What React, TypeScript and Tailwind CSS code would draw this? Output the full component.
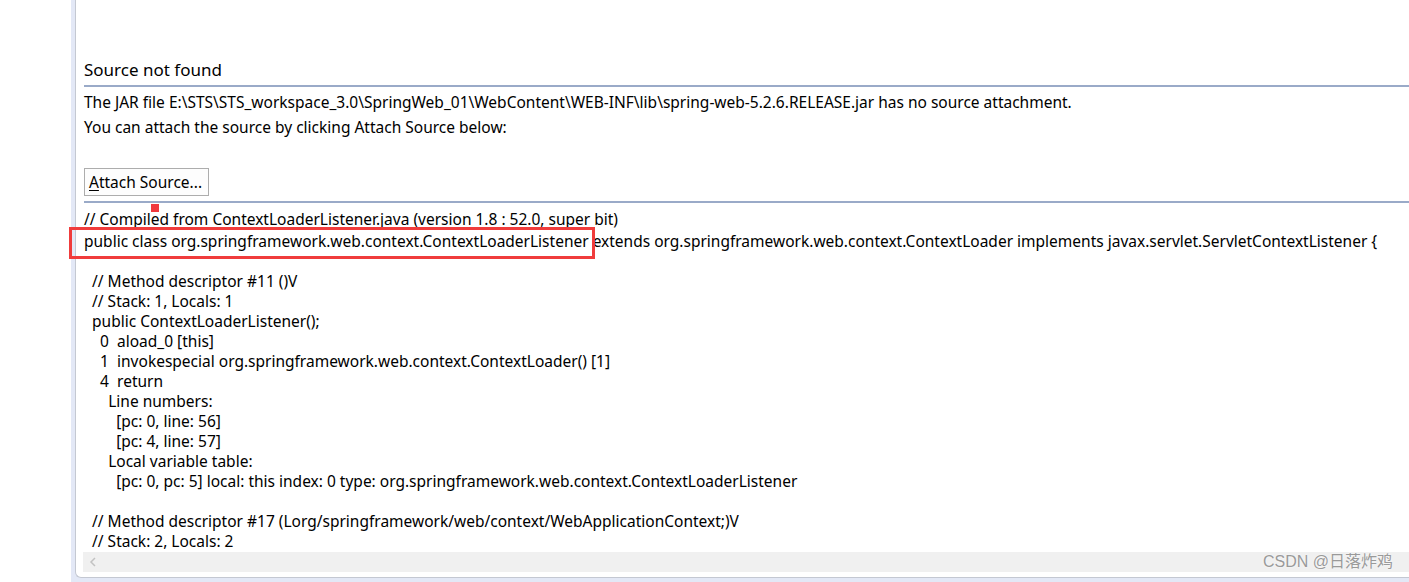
import React from 'react'

const CODE = [
  '  // Method descriptor #11 ()V',
  '  // Stack: 1, Locals: 1',
  '  public ContextLoaderListener();',
  '    0  aload_0 [this]',
  '    1  invokespecial org.springframework.web.context.ContextLoader() [1]',
  '    4  return',
  '      Line numbers:',
  '        [pc: 0, line: 56]',
  '        [pc: 4, line: 57]',
  '      Local variable table:',
  '        [pc: 0, pc: 5] local: this index: 0 type: org.springframework.web.context.ContextLoaderListener',
  '',
  '  // Method descriptor #17 (Lorg/springframework/web/context/WebApplicationContext;)V',
  '  // Stack: 2, Locals: 2',
]

export default function App() {
  return (
    <div
      className="flex h-[582px] w-[1409px] overflow-hidden bg-white text-black"
      style={{ fontFamily: '"Noto Sans", "Open Sans", sans-serif' }}
    >
      {/* left gutter */}
      <div className="w-[71px] shrink-0 bg-white" />
      <div className="w-[4px] shrink-0 bg-[#e3e8f6]" />

      <div className="flex min-w-0 flex-1 flex-col bg-[#e3e8f6]">
        <div className="relative flex h-[578px] flex-col rounded-bl-[6px] border-b border-l border-[#c4c8d2] bg-white pl-[8px]">
          {/* header */}
          <div className="mt-[58px] text-[17px] leading-[24px]">Source not found</div>
          <div className="mt-[3px] h-[2px] bg-[#9aaac8]" />
          <div className="mt-[3px] text-[15.5px] leading-[25px]">
            The JAR file E:\STS\STS_workspace_3.0\SpringWeb_01\WebContent\WEB-INF\lib\spring-web-5.2.6.RELEASE.jar has no source attachment.
          </div>
          <div className="text-[15.5px] leading-[25px]">You can attach the source by clicking Attach Source below:</div>

          <div className="mt-[28px]">
            <button className="h-[28px] w-[125px] border border-[#adadad] bg-[#fdfdfd] pl-[4px] pt-[2px] text-left text-[15.5px] leading-none">
              <span className="underline underline-offset-2">A</span>ttach Source...
            </button>
          </div>
          <div className="mt-[5px] h-[2px] bg-[#9aaac8]" />

          {/* red marker */}
          <div className="absolute left-[75px] top-[204px] h-[8px] w-[8px] bg-[#f0383d]" />

          <div className="mt-[6px] whitespace-pre text-[15.5px] leading-[20px]">
            <div>// Compiled from ContextLoaderListener.java (version 1.8 : 52.0, super bit)</div>
            <div className="mt-[2px]">
              public class org.springframework.web.context.ContextLoaderListener extends org.springframework.web.context.ContextLoader implements javax.servlet.ServletContextListener {'{'}
            </div>
            <div>&nbsp;</div>
            {CODE.map((l, i) => (
              <div key={i}>{l || '\u00a0'}</div>
            ))}
          </div>

          {/* highlight box */}
          <div className="absolute left-[-7px] top-[227px] h-[32px] w-[526px] border-[3px] border-[#f03c3c]" />

          {/* horizontal scrollbar */}
          <div className="absolute bottom-[5px] left-[7px] right-0 flex h-[20px] items-center bg-[#f0f0f0]">
            <svg className="ml-[6px]" width="8" height="10" viewBox="0 0 8 10" fill="none">
              <path d="M6 1L2 5l4 4" stroke="#c2c2c2" strokeWidth="1.5" />
            </svg>
            <div
              className="ml-auto mr-[16px] text-[16px] text-[#9a9a9a]"
              style={{ fontFamily: '"Liberation Sans", "Noto Sans CJK SC", sans-serif', textShadow: '0 0 2px #fff' }}
            >
              CSDN @日落炸鸡
            </div>
          </div>
        </div>
      </div>
    </div>
  )
}
